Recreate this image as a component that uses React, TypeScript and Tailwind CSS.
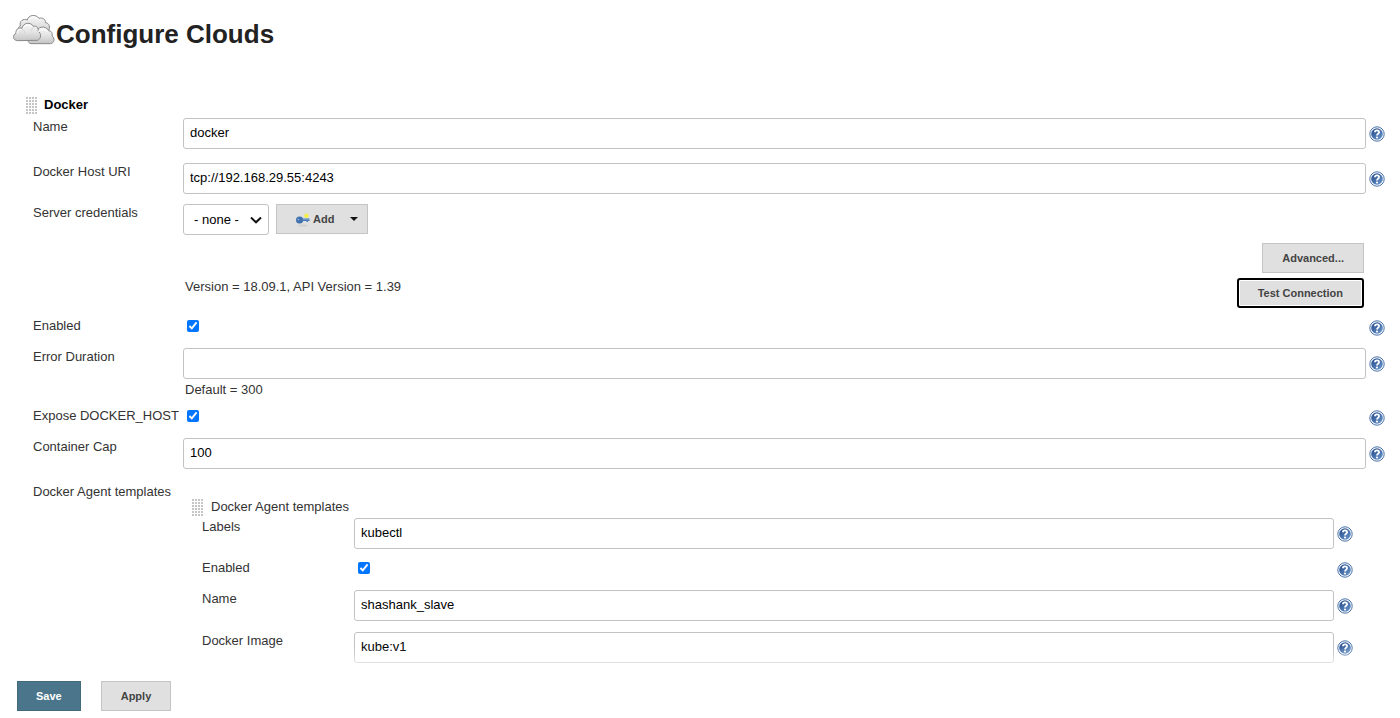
import { useId, type ReactNode } from "react";

// =============================================================================
// Icons
// =============================================================================

function CloudsIcon() {
  return (
    <svg width="42" height="30" viewBox="0 0 126 90" aria-hidden="true" className="shrink-0">
      <defs>
        <linearGradient id="cloud" x1="0" y1="0" x2="0" y2="1">
          <stop offset="0" stopColor="#f8f8f8" />
          <stop offset="0.5" stopColor="#e4e4e4" />
          <stop offset="1" stopColor="#c4c4c4" />
        </linearGradient>
      </defs>
      <g fill="url(#cloud)" stroke="#8a8a8a" strokeWidth="3" strokeLinejoin="round">
        <path d="M24 54C13 50 13 36 22 33C18 19 31 9 43 15C45 0 69-4 78 10C90 6 99 15 97 23C109 23 113 39 106 48C102 56 92 56 85 55H30Z" />
        <path d="M54 86C43 84 42 69 52 66C52 55 62 50 70 53C72 34 98 30 107 47C116 47 119 56 117 63C126 68 125 85 112 86Z" />
        <path d="M13 77C-1 76-2 59 9 55C7 44 17 36 27 40C30 22 54 20 61 34C71 31 78 40 75 49C86 54 85 71 74 76Z" />
      </g>
      <g fill="none" stroke="#ffffff" strokeWidth="3" strokeLinecap="round">
        <path d="M31 39C35 28 50 27 57 37" />
        <path d="M47 15C52 4 66 3 74 13" />
        <path d="M75 51C81 41 95 40 103 49" />
        <path d="M12 55C12 47 17 43 24 43" />
      </g>
      <g fill="none" stroke="#c8c8c8" strokeWidth="2" strokeLinecap="round">
        <path d="M28 43C33 45 35 49 35 53" />
        <path d="M61 37C57 39 56 43 56 47" />
      </g>
    </svg>
  );
}

function HelpIcon() {
  return (
    <svg width="16" height="16" viewBox="0 0 16 16" aria-hidden="true">
      <defs>
        <linearGradient id="help" x1="0" y1="0" x2="1" y2="1">
          <stop offset="0" stopColor="#1f4787" />
          <stop offset="1" stopColor="#6f9bd0" />
        </linearGradient>
      </defs>
      <circle cx="8" cy="8" r="7.2" fill="#fff" stroke="#4a72ab" strokeWidth="1" />
      <circle cx="8" cy="8" r="5.8" fill="url(#help)" />
      <path
        d="M5.9 6.3C5.9 3.6 10.1 3.7 10.1 6.1C10.1 7.8 8 7.6 8 9.4"
        fill="none"
        stroke="#fff"
        strokeWidth="1.8"
      />
      <circle cx="8" cy="11.5" r="1.1" fill="#fff" />
    </svg>
  );
}

function KeyIcon() {
  return (
    <svg width="16" height="16" viewBox="0 0 16 16" aria-hidden="true">
      <ellipse cx="8" cy="14.5" rx="5" ry="1" fill="#cfcfcf" />
      <circle cx="11.5" cy="4.8" r="2.2" fill="#f5ee45" />
      <circle cx="4.6" cy="9" r="3.6" fill="#3f70ad" />
      <path d="M7 7.4H14.5V10H13V11H11.5V10H7Z" fill="#4a7ab5" />
      <path d="M8 8H14" stroke="#8db0d8" />
      <circle cx="3.4" cy="8.5" r="0.9" fill="#86abd6" />
    </svg>
  );
}

function DragHandle() {
  return (
    <svg width="11" height="17" viewBox="0 0 11 17" aria-hidden="true" className="shrink-0">
      <defs>
        <pattern id="grip" width="3" height="3" patternUnits="userSpaceOnUse">
          <rect width="2" height="2" fill="#c6c6c6" />
        </pattern>
      </defs>
      <rect width="11" height="17" fill="url(#grip)" />
    </svg>
  );
}

// =============================================================================
// Form pieces
// =============================================================================

interface RowProps {
  label?: string;
  htmlFor?: string;
  nested?: boolean;
  help?: "input" | "checkbox";
  className: string;
  children?: ReactNode;
}

function Row({ label, htmlFor, nested, help, className, children }: RowProps) {
  return (
    <div className={`flex items-start ${className}`}>
      <div className={`shrink-0 whitespace-nowrap ${nested ? "w-[152px]" : "w-[150px]"}`}>
        {label && <label htmlFor={htmlFor}>{label}</label>}
      </div>
      <div className="min-w-0 flex-1">{children}</div>
      <div className="ml-[3px] w-4 shrink-0">
        {help && (
          <button
            type="button"
            aria-label={`Help for ${label}`}
            className={`block cursor-pointer ${help === "input" ? "mt-2" : "mt-[3px]"}`}
          >
            <HelpIcon />
          </button>
        )}
      </div>
    </div>
  );
}

interface FieldProps {
  label: string;
  value?: string;
  nested?: boolean;
  hint?: string;
  className: string;
}

function TextRow({ label, value = "", nested, hint, className }: FieldProps) {
  const id = useId();
  return (
    <Row label={label} htmlFor={id} nested={nested} help="input" className={className}>
      <input
        id={id}
        type="text"
        defaultValue={value}
        className="block h-[31px] w-full rounded-[3px] border border-[#c3c3c3] bg-white px-1.5 pb-0.5 text-black"
      />
      {hint && <div className="pt-0.5 pl-0.5">{hint}</div>}
    </Row>
  );
}

function CheckRow({ label, nested, className }: FieldProps) {
  const id = useId();
  return (
    <Row label={label} htmlFor={id} nested={nested} help="checkbox" className={className}>
      <input id={id} type="checkbox" defaultChecked className="mt-[3px] ml-1 block size-3" />
    </Row>
  );
}

const button = "h-[30px] cursor-pointer text-[11px] leading-4 font-bold";
const grayButton = `${button} border border-[#c4c4c4] bg-[#e0e0e0] text-[#444]`;

export default function App() {
  return (
    <div className="min-h-screen bg-white font-['Liberation_Sans',Arial,sans-serif] text-[13px] leading-[18px] text-[#333]">
      <header className="flex items-start pt-[15px] pl-[13px]">
        <CloudsIcon />
        <h1 className="pt-[3px] pl-px text-[26px] leading-8 font-bold text-[#222]">
          Configure Clouds
        </h1>
      </header>

      <form>
        <main className="pt-[46px] pr-[15px]">
          <div className="flex items-center gap-[7px] pb-1 pl-[26px]">
            <DragHandle />
            <h2 className="font-bold text-black">Docker</h2>
          </div>

          <div className="pl-[33px]">
            <TextRow label="Name" value="docker" className="pb-3.5" />
            <TextRow label="Docker Host URI" value="tcp://192.168.29.55:4243" className="pb-2.5" />

            <Row label="Server credentials" htmlFor="credentials" className="pb-2">
              <div className="flex gap-[7px]">
                <div className="relative">
                  <select
                    id="credentials"
                    className="block h-[31px] w-[86px] appearance-none rounded-[3px] border border-[#c3c3c3] bg-white pl-2.5 text-black"
                  >
                    <option>- none -</option>
                  </select>
                  <svg
                    width="12"
                    height="8"
                    viewBox="0 0 12 8"
                    aria-hidden="true"
                    className="pointer-events-none absolute top-3 right-[7px]"
                  >
                    <path d="M1 1.5L6 6.3L11 1.5" fill="none" stroke="#111" strokeWidth="2" />
                  </svg>
                </div>
                <button type="button" className={`${grayButton} flex items-center pr-[9px] pl-[18px]`}>
                  <KeyIcon />
                  <span className="pl-0.5">Add</span>
                  <svg width="8" height="4" viewBox="0 0 8 4" aria-hidden="true" className="ml-4">
                    <path d="M0 0H8L4 4Z" fill="#111" />
                  </svg>
                </button>
              </div>
            </Row>

            <Row className="pb-[5px]">
              <div className="flex justify-end pr-0.5">
                <button type="button" className={`${grayButton} px-[19px]`}>
                  Advanced...
                </button>
              </div>
            </Row>

            <Row className="pb-[9px]">
              <div className="flex items-start justify-between px-0.5">
                <span>Version = 18.09.1, API Version = 1.39</span>
                <button
                  type="button"
                  className={`${button} rounded-[3px] border-2 border-black bg-[#e0e0e0] px-[19px] text-[#444] shadow-[inset_0_0_0_1px_#fff]`}
                >
                  Test Connection
                </button>
              </div>
            </Row>

            <CheckRow label="Enabled" className="pb-3" />
            <TextRow label="Error Duration" hint="Default = 300" className="pb-2" />
            <CheckRow label="Expose DOCKER_HOST" className="pb-3" />
            <TextRow label="Container Cap" value="100" className="pb-3.5" />

            <div className="flex items-start">
              <div className="w-[150px] shrink-0">Docker Agent templates</div>
              <section className="min-w-0 flex-1 pt-[15px] pr-8 pl-[19px]">
                <div className="-ml-2.5 flex items-center gap-2 pb-0.5">
                  <DragHandle />
                  <h3>Docker Agent templates</h3>
                </div>
                <TextRow nested label="Labels" value="kubectl" className="pb-2.5" />
                <CheckRow nested label="Enabled" className="pb-3" />
                <TextRow nested label="Name" value="shashank_slave" className="pb-[11px]" />
                <TextRow nested label="Docker Image" value="kube:v1" className="" />
              </section>
            </div>
          </div>
        </main>

        <footer className="sticky bottom-0 bg-white pt-[18px] pb-2 pl-[17px]">
          <div className="pointer-events-none absolute inset-x-0 bottom-full h-4 bg-linear-to-t from-white/50 to-transparent" />
          <div className="flex gap-5">
            <button
              type="submit"
              className={`${button} border border-[#42697d] bg-[#4b758b] px-[18px] text-white`}
            >
              Save
            </button>
            <button type="button" className={`${grayButton} px-[19px]`}>
              Apply
            </button>
          </div>
        </footer>
      </form>
    </div>
  );
}
